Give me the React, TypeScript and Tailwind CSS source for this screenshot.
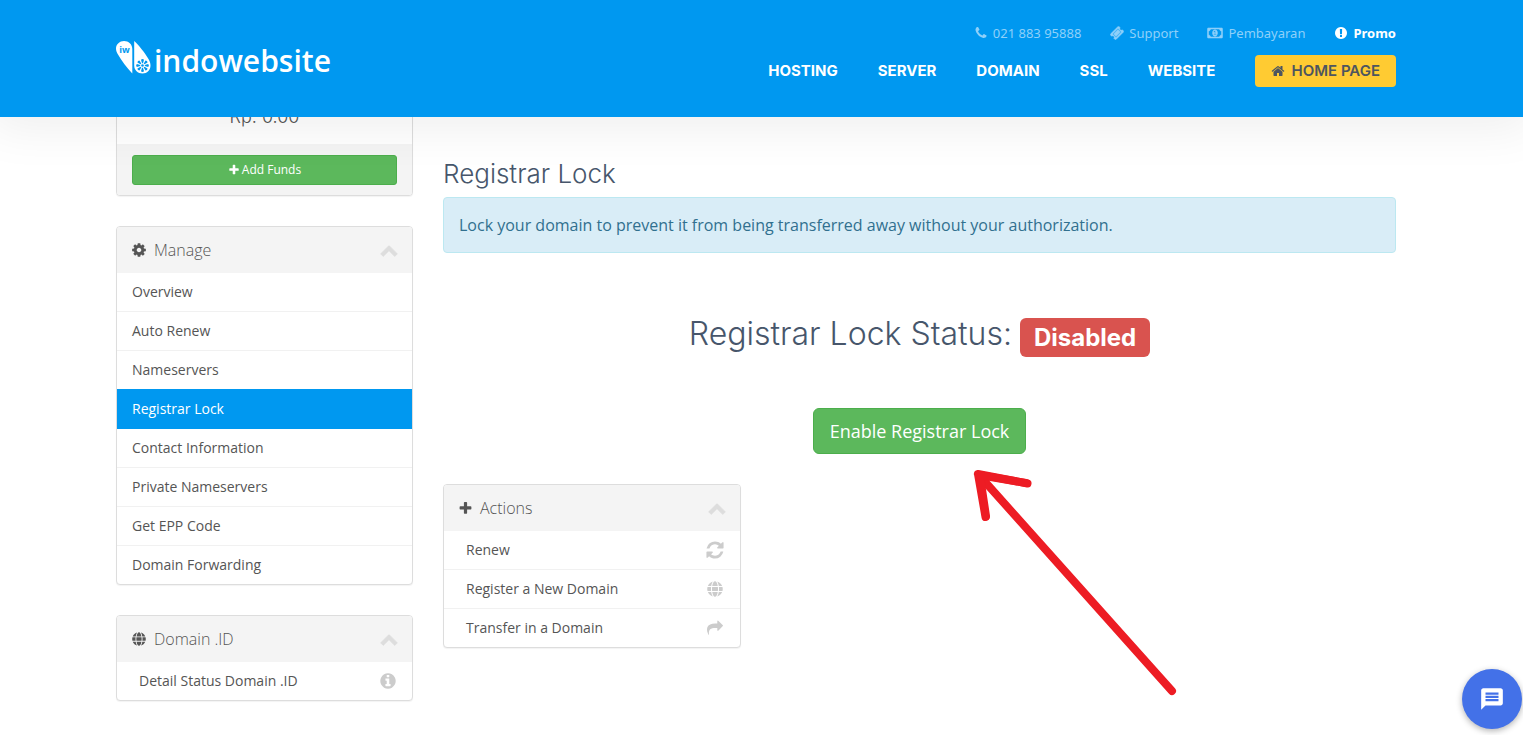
import type { ReactNode } from "react";
import { FaGlobe } from "react-icons/fa";
import { MdMessage } from "react-icons/md";

const PATHS = {
  phone:
    "M1600 1240q0 27-10 70.5t-21 68.5q-21 50-122 106-94 51-186 51-27 0-53-3.5t-57.5-12.5-47-14.5-55.5-20.5-49-18q-98-35-175-83-127-79-264-216t-216-264q-48-77-83-175-3-9-18-49t-20.5-55.5-14.5-47-12.5-57.5-3.5-53q0-92 51-186 56-101 106-122 25-11 68.5-21t70.5-10q14 0 21 3 18 6 53 76 11 19 30 54t35 63.5 31 53.5q3 4 17.5 25t21.5 35.5 7 28.5q0 20-28.5 50t-62 55-62 53-28.5 46q0 9 5 22.5t8.5 20.5 14 24 11.5 19q76 137 174 235t235 174q2 1 19 11.5t24 14 20.5 8.5 22.5 5q18 0 46-28.5t53-62 55-62 50-28.5q14 0 28.5 7t35.5 21.5 25 17.5q25 15 53.5 31t63.5 35 54 30q70 35 76 53 3 7 3 21z",
  ticket:
    "M1024 452l316 316-572 572-316-316zm-211 979l618-618q19-19 19-45t-19-45l-362-362q-18-18-45-18t-45 18l-618 618q-19 19-19 45t19 45l362 362q18 18 45 18t45-18zm889-637l-907 908q-37 37-90.5 37t-90.5-37l-126-125q56-56 56-136t-56-136-136-56-136 56l-125-126q-37-37-37-90.5t37-90.5l907-906q37-37 90.5-37t90.5 37l125 125q-56 56-56 136t56 136 136 56 136-56l126 125q37 37 37 90.5t-37 90.5z",
  money:
    "M768 1152h384v-96h-128v-448h-114l-148 137 77 80q42-37 55-57h2v288h-128v96zm512-256q0 70-21 142t-59.5 134-101.5 101-138 39-138-39-101.5-101-59.5-134-21-142 21-142 59.5-134 101.5-101 138-39 138 39 101.5 101 59.5 134 21 142zm512 256v-512q-106 0-181-75t-75-181h-1152q0 106-75 181t-181 75v512q106 0 181 75t75 181h1152q0-106 75-181t181-75zm128-832v1152q0 26-19 45t-45 19h-1792q-26 0-45-19t-19-45v-1152q0-26 19-45t45-19h1792q26 0 45 19t19 45z",
  alert:
    "M896 128q209 0 385.5 103t279.5 279.5 103 385.5-103 385.5-279.5 279.5-385.5 103-385.5-103-279.5-279.5-103-385.5 103-385.5 279.5-279.5 385.5-103zm128 1247v-190q0-14-9-23.5t-22-9.5h-192q-13 0-23 10t-10 23v190q0 13 10 23t23 10h192q13 0 22-9.5t9-23.5zm-2-344l18-621q0-12-10-18-10-8-24-8h-220q-14 0-24 8-10 6-10 18l17 621q0 10 10 17.5t24 7.5h185q14 0 23.5-7.5t10.5-17.5z",
  home:
    "M1472 992v480q0 26-19 45t-45 19h-384v-384h-256v384h-384q-26 0-45-19t-19-45v-480q0-1 .5-3t.5-3l575-474 575 474q1 2 1 6zm223-69l-62 74q-8 9-21 11h-3q-13 0-21-7l-692-577-692 577q-12 8-24 7-13-2-21-11l-62-74q-8-10-7-23.5t11-21.5l719-599q32-26 76-26t76 26l244 204v-195q0-14 9-23t23-9h192q14 0 23 9t9 23v408l219 182q10 8 11 21.5t-7 23.5z",
  plus:
    "M1600 736v192q0 40-28 68t-68 28h-416v416q0 40-28 68t-68 28h-192q-40 0-68-28t-28-68v-416h-416q-40 0-68-28t-28-68v-192q0-40 28-68t68-28h416v-416q0-40 28-68t68-28h192q40 0 68 28t28 68v416h416q40 0 68 28t28 68z",
  cog:
    "M1152 896q0-106-75-181t-181-75-181 75-75 181 75 181 181 75 181-75 75-181zm512-109v222q0 12-8 23t-20 13l-185 28q-19 54-39 91 35 50 107 138 10 12 10 25t-9 23q-27 37-99 108t-94 71q-12 0-26-9l-138-108q-44 23-91 38-16 136-29 186-7 28-36 28h-222q-14 0-24.5-8.5t-11.5-21.5l-28-184q-49-16-90-37l-141 107q-10 9-25 9-14 0-25-11-126-114-165-168-7-10-7-23 0-12 8-23 15-21 51-66.5t54-70.5q-27-50-41-99l-183-27q-13-2-21-12.5t-8-23.5v-222q0-12 8-23t19-13l186-28q14-46 39-92-40-57-107-138-10-12-10-24 0-10 9-23 26-36 98.5-107.5t94.5-71.5q13 0 26 10l138 107q44-23 91-38 16-136 29-186 7-28 36-28h222q14 0 24.5 8.5t11.5 21.5l28 184q49 16 90 37l142-107q9-9 24-9 13 0 25 10 129 119 165 170 7 8 7 22 0 12-8 23-15 21-51 66.5t-54 70.5q26 50 41 98l183 28q13 2 21 12.5t8 23.5z",
  chevron:
    "M1683 1331l-166 165q-19 19-45 19t-45-19l-531-531-531 531q-19 19-45 19t-45-19l-166-165q-19-19-19-45.5t19-45.5l742-741q19-19 45-19t45 19l742 741q19 19 19 45.5t-19 45.5z",
  refresh:
    "M1639 1056q0 5-1 7-64 268-268 434.5t-478 166.5q-146 0-282.5-55t-243.5-157l-129 129q-19 19-45 19t-45-19-19-45v-448q0-26 19-45t45-19h448q26 0 45 19t19 45-19 45l-137 137q71 66 161 102t187 36q134 0 250-65t186-179q11-17 53-117 8-23 30-23h192q13 0 22.5 9.5t9.5 22.5zm25-800v448q0 26-19 45t-45 19h-448q-26 0-45-19t-19-45 19-45l138-138q-148-137-349-137-134 0-250 65t-186 179q-11 17-53 117-8 23-30 23h-199q-13 0-22.5-9.5t-9.5-22.5v-7q65-268 270-434.5t480-166.5q146 0 284 55.5t245 156.5l130-129q19-19 45-19t45 19 19 45z",
  share:
    "M1792 640q0 26-19 45l-512 512q-19 19-45 19t-45-19-19-45v-256h-224q-98 0-175.5 6t-154 21.5-133 42.5-105.5 69.5-80 101-48.5 138.5-17.5 181q0 55 5 123 0 6 2.5 23.5t2.5 26.5q0 15-8.5 25t-23.5 10q-16 0-28-17-7-9-13-22t-13.5-30-10.5-24q-127-285-127-451 0-199 53-333 162-403 875-403h224v-256q0-26 19-45t45-19 45 19l512 512q19 19 19 45z",
  info:
    "M1152 1376v-160q0-14-9-23t-23-9h-96v-512q0-14-9-23t-23-9h-320q-14 0-23 9t-9 23v160q0 14 9 23t23 9h96v320h-96q-14 0-23 9t-9 23v160q0 14 9 23t23 9h448q14 0 23-9t9-23zm-128-896v-160q0-14-9-23t-23-9h-192q-14 0-23 9t-9 23v160q0 14 9 23t23 9h192q14 0 23-9t9-23zm640 416q0 209-103 385.5t-279.5 279.5-385.5 103-385.5-103-279.5-279.5-103-385.5 103-385.5 279.5-279.5 385.5-103 385.5 103 279.5 279.5 103 385.5z",
};

function Icon({ name, className }: { name: keyof typeof PATHS; className?: string }) {
  const heavy = name === "ticket" || name === "money" || name === "chevron";
  return (
    <svg
      viewBox={name === "money" ? "0 0 1920 1792" : "0 0 1792 1792"}
      fill="currentColor"
      stroke={heavy ? "currentColor" : "none"}
      strokeWidth="70"
      className={`shrink-0 ${className ?? ""}`}
      aria-hidden="true"
    >
      <path d={PATHS[name]} />
    </svg>
  );
}

function Logo() {
  return (
    <a href="#" className="flex items-start gap-[3px] text-white">
      <svg width="35" height="33" viewBox="0 0 35 33" className="shrink-0" aria-hidden="true">
        <path d="M8 0C12.500 0 16.300 3 16.300 8V32.500C11 27 5.500 19.500 2 13.500C.7 11.500 0 9.500 0 7.500C0 3.300 3.800 0 8 0Z" fill="#fff" />
        <path d="M18.200 0C23 4.500 29 12 32.500 18C33.800 20.200 34.500 22.500 34.500 24.500C34.500 29 31 32.500 26.500 32.500C21.800 32.500 18.200 29 18.200 24.500Z" fill="#fff" />
        <text x="8.500" y="11.500" textAnchor="middle" fontFamily="Open Sans, sans-serif" fontSize="9" fontWeight="700" fill="#0098f0">
          iw
        </text>
        <g fill="#0098f0">
          {[0, 45, 90, 135, 180, 225, 270, 315].map((deg) => (
            <path key={deg} d="M26 22.200L25 18.800Q26.500 17.400 28 18.800L27 22.200Z" transform={`rotate(${deg} 26.500 24.500)`} />
          ))}
        </g>
        <circle cx="26.500" cy="24.500" r="1.300" fill="#0098f0" />
      </svg>
      <span className="text-[30px] leading-10 font-semibold">indowebsite</span>
    </a>
  );
}

const topLinks: { icon: keyof typeof PATHS; label: string; strong?: boolean }[] = [
  { icon: "phone", label: "021 883 95888" },
  { icon: "ticket", label: "Support" },
  { icon: "money", label: "Pembayaran" },
  { icon: "alert", label: "Promo", strong: true },
];

const mainLinks = ["HOSTING", "SERVER", "DOMAIN", "SSL", "WEBSITE"];

const manageLinks = [
  "Overview",
  "Auto Renew",
  "Nameservers",
  "Registrar Lock",
  "Contact Information",
  "Private Nameservers",
  "Get EPP Code",
  "Domain Forwarding",
];

function Header() {
  return (
    <header className="relative z-10 bg-[#0098f0] pr-[11px] shadow-[0_0_50px_10px_rgba(0,0,0,0.07)]">
      <div className="mx-auto flex h-[117px] max-w-[1280px] justify-between">
        <div className="pt-[41px]">
          <Logo />
        </div>
        <div className="flex flex-col items-end gap-3 pt-[23px]">
          <nav className="flex gap-[29px] font-['Noto_Sans',sans-serif] text-[13px] leading-5">
            {topLinks.map((l) => (
              <a
                key={l.label}
                href="#"
                className={`flex items-center gap-[5px] ${l.strong ? "font-bold text-white" : "text-[#8fd0f9]"}`}
              >
                <Icon name={l.icon} className={l.icon === "money" ? "h-[14px] w-4" : "size-[14px]"} />
                {l.label}
              </a>
            ))}
          </nav>
          <nav className="flex items-center gap-10 font-['Inter',sans-serif] text-[15px] font-bold text-white">
            {mainLinks.map((l) => (
              <a key={l} href="#">
                {l}
              </a>
            ))}
            <a
              href="#"
              className="flex h-8 items-center gap-[6px] rounded bg-[#ffcb32] px-4 font-semibold text-[#4d5560]"
            >
              <Icon name="home" className="size-[14px]" />
              HOME PAGE
            </a>
          </nav>
        </div>
      </div>
    </header>
  );
}

function Panel({ icon, title, children }: { icon: ReactNode; title: string; children: ReactNode }) {
  return (
    <section className="overflow-hidden rounded border border-[#ddd] bg-white shadow-[0_1px_1px_rgba(0,0,0,0.05)]">
      <h3 className="flex h-[46px] items-center bg-[#f4f4f4] px-[14px] text-base font-light">
        {icon}
        <span className="ml-[7px] flex-1">{title}</span>
        <button type="button" aria-label={`Collapse ${title}`} className="text-[#ddd]">
          <Icon name="chevron" className="size-[18px]" />
        </button>
      </h3>
      <ul className="text-sm">{children}</ul>
    </section>
  );
}

function Row({ label, active, icon }: { label: string; active?: boolean; icon?: ReactNode }) {
  return (
    <li
      className={`border-b last:border-b-0 ${
        active ? "-mt-px border-[#0098f0] bg-[#0098f0] pt-px text-white" : "border-[#f1f1f1]"
      }`}
    >
      <a
        href="#"
        className={`flex h-[38px] items-center justify-between ${icon ? "pr-[15px] pl-[22px]" : "px-[15px]"}`}
      >
        {label}
        {icon && <span className="text-[#ccc]">{icon}</span>}
      </a>
    </li>
  );
}

function Sidebar() {
  return (
    <aside className="flex w-[297px] shrink-0 flex-col gap-[30px]">
      <section className="overflow-hidden rounded border border-[#ddd] bg-white shadow-[0_1px_1px_rgba(0,0,0,0.05)]">
        <p className="pt-1 pb-3 text-center font-['Inter',sans-serif] text-lg leading-[30px] font-light">Rp. 0.00</p>
        <div className="bg-[#f4f4f4] px-[15px] pt-[11px] pb-[10px]">
          <button
            type="button"
            className="flex h-[30px] w-full items-center justify-center gap-0.5 rounded-[3px] border border-[#4cae4c] bg-[#5cb85c] text-xs text-white"
          >
            <Icon name="plus" className="size-3" />
            Add Funds
          </button>
        </div>
      </section>

      <Panel icon={<Icon name="cog" className="size-4" />} title="Manage">
        {manageLinks.map((label) => (
          <Row key={label} label={label} active={label === "Registrar Lock"} />
        ))}
      </Panel>

      <Panel icon={<FaGlobe className="mx-px size-[14px]" />} title="Domain .ID">
        <Row label="Detail Status Domain .ID" icon={<Icon name="info" className="size-[18px]" />} />
      </Panel>
    </aside>
  );
}

function RegistrarLock() {
  return (
    <main className="min-w-0 flex-1 pt-[61px] text-[#47566b]">
      <h2 className="font-['Inter',sans-serif] text-[26px] leading-8 font-light">Registrar Lock</h2>
      <p className="mt-[7px] rounded border border-[#bce8f1] bg-[#d9edf7] px-[15px] py-[15px] text-base text-[#31708f]">
        Lock your domain to prevent it from being transferred away without your authorization.
      </p>

      <div className="mt-[65px] flex items-start justify-center gap-2 font-['Inter',sans-serif]">
        <h1 className="text-[32px] leading-8 font-light">Registrar Lock Status:</h1>
        <span className="rounded-md bg-[#d9534f] px-[14px] text-[24px] leading-[39px] font-bold text-white">
          Disabled
        </span>
      </div>

      <div className="mt-[51px] flex justify-center">
        <button
          type="button"
          className="h-[46px] rounded-md border border-[#4cae4c] bg-[#5cb85c] px-4 text-lg text-white"
        >
          Enable Registrar Lock
        </button>
      </div>

      <div className="mt-[30px] w-[298px] text-[#555]">
        <Panel icon={<Icon name="plus" className="size-[15px]" />} title="Actions">
          <Row label="Renew" icon={<Icon name="refresh" className="size-5" />} />
          <Row label="Register a New Domain" icon={<FaGlobe className="mx-0.5 size-4" />} />
          <Row label="Transfer in a Domain" icon={<Icon name="share" className="mx-0.5 size-4" />} />
        </Panel>
      </div>
    </main>
  );
}

export default function App() {
  return (
    <div className="relative min-h-screen overflow-hidden bg-white font-['Open_Sans',sans-serif] text-[#555]">
      <Header />
      <div className="-mt-5 pr-[11px]">
        <div className="mx-auto flex max-w-[1280px] gap-[30px]">
          <Sidebar />
          <RegistrarLock />
        </div>
      </div>

      {/* hand-drawn pointer to the enable button */}
      <svg
        className="pointer-events-none absolute top-[468px] left-[972px]"
        width="206"
        height="228"
        viewBox="0 0 206 228"
        fill="none"
        stroke="#ed1c24"
        strokeWidth="8"
        strokeLinecap="round"
        strokeLinejoin="round"
        aria-hidden="true"
      >
        <path d="M200 223L6 6L55.500 15.500M6 6L13.500 49" />
        <path d="M7 7L54 15M8 8L14 48" />
      </svg>

      <button
        type="button"
        aria-label="Open chat"
        className="fixed right-px bottom-[6px] z-20 flex size-[60px] items-center justify-center rounded-full bg-[#4371e8] text-white shadow-[0_2px_6px_rgba(0,0,0,0.3)]"
      >
        <MdMessage className="size-[26px]" />
      </button>
    </div>
  );
}
